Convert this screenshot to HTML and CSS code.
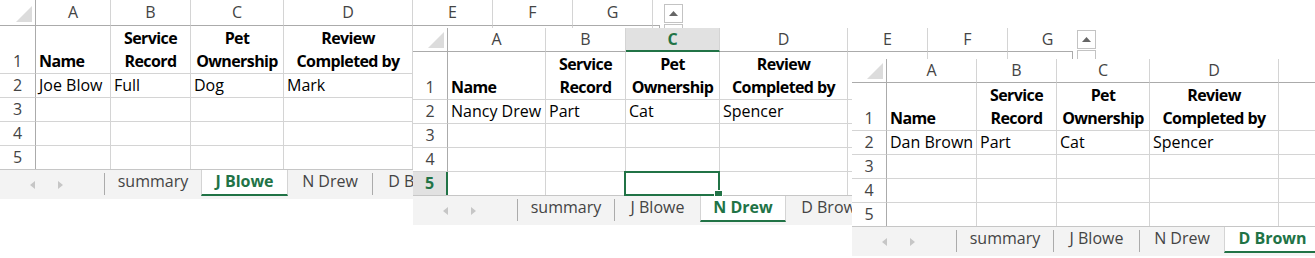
FILE: index.html
```html
<!DOCTYPE html>
<html>
<head>
<meta charset="utf-8">
<link rel="stylesheet" href="styles.css">
</head>
<body>
<div class="desk">

  <div class="win w1">
    <div class="top">
      <div class="sheet">
        <div class="row hdr">
          <div class="c c0 corner"><svg width="16" height="16" viewBox="0 0 16 16"><polygon points="16,0 16,16 0,16" fill="#dcdcdc"/></svg></div>
          <div class="c ca">A</div><div class="c cb">B</div><div class="c cc">C</div><div class="c cd">D</div><div class="c ce">E</div><div class="c cf">F</div><div class="c cg">G</div><div class="c ch"></div>
        </div>
        <div class="body">
          <div class="row r1"><div class="c c0">1</div><div class="c ca b">Name</div><div class="c cb b ctr"><span>Service<br>Record</span></div><div class="c cc b ctr"><span>Pet<br>Ownership</span></div><div class="c cd b ctr"><span>Review<br>Completed by</span></div><div class="c ce"></div><div class="c cf"></div><div class="c cg"></div><div class="c ch"></div></div>
          <div class="row"><div class="c c0">2</div><div class="c ca">Joe Blow</div><div class="c cb">Full</div><div class="c cc">Dog</div><div class="c cd">Mark</div><div class="c ce"></div><div class="c cf"></div><div class="c cg"></div><div class="c ch"></div></div>
          <div class="row"><div class="c c0">3</div><div class="c ca"></div><div class="c cb"></div><div class="c cc"></div><div class="c cd"></div><div class="c ce"></div><div class="c cf"></div><div class="c cg"></div><div class="c ch"></div></div>
          <div class="row"><div class="c c0">4</div><div class="c ca"></div><div class="c cb"></div><div class="c cc"></div><div class="c cd"></div><div class="c ce"></div><div class="c cf"></div><div class="c cg"></div><div class="c ch"></div></div>
          <div class="row"><div class="c c0">5</div><div class="c ca"></div><div class="c cb"></div><div class="c cc"></div><div class="c cd"></div><div class="c ce"></div><div class="c cf"></div><div class="c cg"></div><div class="c ch"></div></div>
        </div>
      </div>
      <div class="vscroll">
        <div class="arrow"><svg width="9" height="5" viewBox="0 0 9 5"><polygon points="0,5 4.5,0 9,5" fill="#666"/></svg></div>
        <div class="track"></div>
      </div>
    </div>
    <div class="tabbar">
      <div class="nav"><span class="tl"></span><span class="tr"></span></div>
      <span class="sep"></span>
      <div class="tab t1">summary</div>
      <div class="tab t2 on">J Blowe</div>
      <div class="tab t3">N Drew</div>
      <span class="sep"></span>
      <div class="tab t4">D Brown</div>
    </div>
  </div>

  <div class="win w2">
    <div class="top">
      <div class="sheet">
        <div class="row hdr">
          <div class="c c0 corner"><svg width="16" height="16" viewBox="0 0 16 16"><polygon points="16,0 16,16 0,16" fill="#dcdcdc"/></svg></div>
          <div class="c ca">A</div><div class="c cb">B</div><div class="c cc selc">C</div><div class="c cd">D</div><div class="c ce">E</div><div class="c cf">F</div><div class="c cg">G</div><div class="c ch"></div>
        </div>
        <div class="body">
          <div class="row r1"><div class="c c0">1</div><div class="c ca b">Name</div><div class="c cb b ctr"><span>Service<br>Record</span></div><div class="c cc b ctr"><span>Pet<br>Ownership</span></div><div class="c cd b ctr"><span>Review<br>Completed by</span></div><div class="c ce"></div><div class="c cf"></div><div class="c cg"></div><div class="c ch"></div></div>
          <div class="row"><div class="c c0">2</div><div class="c ca">Nancy Drew</div><div class="c cb">Part</div><div class="c cc">Cat</div><div class="c cd">Spencer</div><div class="c ce"></div><div class="c cf"></div><div class="c cg"></div><div class="c ch"></div></div>
          <div class="row"><div class="c c0">3</div><div class="c ca"></div><div class="c cb"></div><div class="c cc"></div><div class="c cd"></div><div class="c ce"></div><div class="c cf"></div><div class="c cg"></div><div class="c ch"></div></div>
          <div class="row"><div class="c c0">4</div><div class="c ca"></div><div class="c cb"></div><div class="c cc"></div><div class="c cd"></div><div class="c ce"></div><div class="c cf"></div><div class="c cg"></div><div class="c ch"></div></div>
          <div class="row"><div class="c c0 selr">5</div><div class="c ca"></div><div class="c cb"></div><div class="c cc selcell"></div><div class="c cd"></div><div class="c ce"></div><div class="c cf"></div><div class="c cg"></div><div class="c ch"></div></div>
        </div>
      </div>
      <div class="vscroll">
        <div class="arrow"><svg width="9" height="5" viewBox="0 0 9 5"><polygon points="0,5 4.5,0 9,5" fill="#666"/></svg></div>
        <div class="track"></div>
      </div>
    </div>
    <div class="tabbar">
      <div class="nav"><span class="tl"></span><span class="tr"></span></div>
      <span class="sep"></span>
      <div class="tab t1">summary</div>
      <span class="sep"></span>
      <div class="tab t2">J Blowe</div>
      <div class="tab t3 on">N Drew</div>
      <div class="tab t4">D Brown</div>
    </div>
  </div>

  <div class="win w3">
    <div class="top">
      <div class="sheet">
        <div class="row hdr">
          <div class="c c0 corner"><svg width="16" height="16" viewBox="0 0 16 16"><polygon points="16,0 16,16 0,16" fill="#dcdcdc"/></svg></div>
          <div class="c ca">A</div><div class="c cb">B</div><div class="c cc">C</div><div class="c cd">D</div><div class="c ce"></div><div class="c cf"></div><div class="c cg"></div><div class="c ch"></div>
        </div>
        <div class="body">
          <div class="row r1"><div class="c c0">1</div><div class="c ca b">Name</div><div class="c cb b ctr"><span>Service<br>Record</span></div><div class="c cc b ctr"><span>Pet<br>Ownership</span></div><div class="c cd b ctr"><span>Review<br>Completed by</span></div><div class="c ce"></div><div class="c cf"></div><div class="c cg"></div><div class="c ch"></div></div>
          <div class="row"><div class="c c0">2</div><div class="c ca">Dan Brown</div><div class="c cb">Part</div><div class="c cc">Cat</div><div class="c cd">Spencer</div><div class="c ce"></div><div class="c cf"></div><div class="c cg"></div><div class="c ch"></div></div>
          <div class="row"><div class="c c0">3</div><div class="c ca"></div><div class="c cb"></div><div class="c cc"></div><div class="c cd"></div><div class="c ce"></div><div class="c cf"></div><div class="c cg"></div><div class="c ch"></div></div>
          <div class="row"><div class="c c0">4</div><div class="c ca"></div><div class="c cb"></div><div class="c cc"></div><div class="c cd"></div><div class="c ce"></div><div class="c cf"></div><div class="c cg"></div><div class="c ch"></div></div>
          <div class="row"><div class="c c0">5</div><div class="c ca"></div><div class="c cb"></div><div class="c cc"></div><div class="c cd"></div><div class="c ce"></div><div class="c cf"></div><div class="c cg"></div><div class="c ch"></div></div>
        </div>
      </div>
      <div class="vscroll">
        <div class="arrow"><svg width="9" height="5" viewBox="0 0 9 5"><polygon points="0,5 4.5,0 9,5" fill="#666"/></svg></div>
        <div class="track"></div>
      </div>
    </div>
    <div class="tabbar">
      <div class="nav"><span class="tl"></span><span class="tr"></span></div>
      <span class="sep"></span>
      <div class="tab t1">summary</div>
      <span class="sep"></span>
      <div class="tab t2">J Blowe</div>
      <span class="sep"></span>
      <div class="tab t3">N Drew</div>
      <div class="tab t4 on">D Brown</div>
    </div>
  </div>

</div>
</body>
</html>
```

FILE: styles.css
```css
* { box-sizing: border-box; }

body {
  margin: 0;
  background: #fff;
  font-family: "Open Sans", "Noto Sans", sans-serif;
  font-size: 16px;
  color: #000;
}

.desk {
  position: relative;
  width: 1315px;
  height: 258px;
  overflow: hidden;
  background: #fff;
}

/* windows placed on the free canvas */
.win {
  position: absolute;
  display: flex;
  flex-direction: column;
  background: #fff;
  width: 686px;
}
.w1 { left: 0; top: 0; --hh: 26px; --c0: 36px; --ca: 75px; --cb: 80px; --cc: 93px; --cd: 129px; }
.w2 { left: 413px; top: 28px; --hh: 24px; --c0: 35px; --ca: 98px; --cb: 80px; --cc: 94px; --cd: 128px; }
.w3 { left: 852px; top: 59px; --hh: 24px; --c0: 35px; --ca: 90px; --cb: 80px; --cc: 93px; --cd: 129px; }

.top { display: flex; }

.sheet {
  width: 660px;
  flex: none;
  overflow: hidden;
}

.body {
  width: 660px;
  border-right: 1px solid #ababab;
  overflow: hidden;
}

.row {
  display: flex;
  height: 24px;
}
.row.r1 { height: 48px; }
.row.hdr { height: var(--hh); }

.c {
  flex: none;
  height: 100%;
  display: flex;
  align-items: flex-end;
  padding: 0 3px;
  border-right: 1px solid #d4d4d4;
  border-bottom: 1px solid #d4d4d4;
  line-height: 23px;
  white-space: nowrap;
}
.c0 { width: var(--c0); justify-content: center; color: #444; border-right-color: #ababab; padding: 0; }
.ca { width: var(--ca); }
.cb { width: var(--cb); }
.cc { width: var(--cc); }
.cd { width: var(--cd); }
.ce, .cf, .cg, .ch { width: 80px; }

.ctr { justify-content: center; text-align: center; }
.b { font-weight: 700; letter-spacing: -0.6px; }

.hdr .c {
  align-items: center;
  justify-content: center;
  color: #444;
  border-bottom-color: #ababab;
}
.hdr .corner {
  align-items: flex-end;
  justify-content: flex-end;
  padding: 0 3px 3px 0;
}
.hdr .corner svg { display: block; }

/* selection state */
.hdr .selc {
  background: #e1e1e1;
  color: #217346;
  font-weight: 700;
  border-bottom: 2px solid #217346;
}
.c0.selr {
  background: #e1e1e1;
  color: #217346;
  font-weight: 700;
  border-right: 2px solid #217346;
}
.selcell { position: relative; }
.selcell::after {
  content: "";
  position: absolute;
  left: -2px;
  top: -1px;
  right: -1px;
  bottom: -1px;
  border: 2px solid #217346;
}
.selcell::before {
  content: "";
  position: absolute;
  right: -4px;
  bottom: -4px;
  width: 7px;
  height: 7px;
  background: #217346;
  border: 1px solid #fff;
  z-index: 1;
}

/* vertical scrollbar stub */
.vscroll {
  width: 26px;
  flex: none;
  display: flex;
  flex-direction: column;
  padding: calc(var(--hh) - 22px) 0 0 4px;
  overflow: hidden;
}
.arrow {
  width: 19px;
  height: 19px;
  flex: none;
  border: 1px solid #c3c3c3;
  display: flex;
  align-items: center;
  justify-content: center;
  background: #fff;
}
.arrow svg { display: block; }
.track {
  width: 19px;
  flex: 1;
  margin-top: 1px;
  border: 1px solid #c3c3c3;
  border-bottom: none;
}

/* sheet tabs */
.tabbar {
  display: flex;
  align-items: flex-start;
  height: 30px;
  margin-top: -1px;
  border-top: 1px solid #c6c6c6;
  background: #f3f3f3;
  color: #444;
}
.nav {
  width: 104px;
  flex: none;
  height: 29px;
  display: flex;
  align-items: center;
  padding-left: 30px;
  gap: 23px;
}
.tl, .tr {
  width: 0;
  height: 0;
  border-top: 4px solid transparent;
  border-bottom: 4px solid transparent;
}
.tl { border-right: 5px solid #c6c6c6; }
.tr { border-left: 5px solid #c6c6c6; }

.sep {
  flex: none;
  width: 1px;
  height: 22px;
  margin-top: 3px;
  background: #ababab;
}

.tab {
  box-sizing: content-box;
  flex: none;
  height: 24px;
  line-height: 23px;
  text-align: center;
  white-space: nowrap;
  overflow: hidden;
}
.t1 { width: 96px; }
.t2 { width: 85px; }
.t3 { width: 84px; }
.t4 { width: 95px; }

.tab.on {
  background: #fff;
  border-left: 1px solid #d4d4d4;
  border-right: 1px solid #d4d4d4;
  border-bottom: 2px solid #217346;
  color: #217346;
  font-weight: 700;
}
```
